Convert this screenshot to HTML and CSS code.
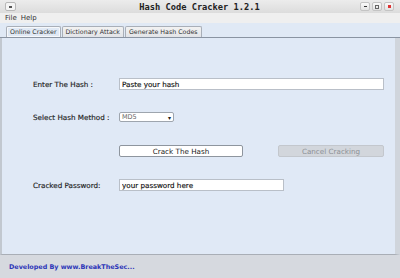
FILE: index.html
```html
<!DOCTYPE html>
<html lang="en">
<head>
    <meta charset="UTF-8">
    <title>Hash Code Cracker 1.2.1</title>
    <link rel="stylesheet" href="styles.css">
</head>
<body>
    <div class="window">
        <div class="titlebar">
            <div class="win-left">
                <span class="win-menu"><span class="dot"></span></span>
            </div>
            <span class="title">Hash Code Cracker 1.2.1</span>
            <div class="win-buttons">
                <span class="wbtn"><span class="min"></span></span>
                <span class="wbtn"><span class="max"></span></span>
                <span class="wbtn"><span class="close"></span></span>
            </div>
        </div>
        <div class="menubar">
            <span>File</span>
            <span>Help</span>
        </div>
        <div class="tabs">
            <span class="tab active">Online Cracker</span>
            <span class="tab">Dictionary Attack</span>
            <span class="tab">Generate Hash Codes</span>
        </div>
        <main class="panel">
            <div class="row row-hash">
                <label class="label">Enter The Hash :</label>
                <input class="field wide" type="text" value="Paste your hash">
            </div>
            <div class="row row-method">
                <label class="label">Select Hash Method :</label>
                <div class="select">
                    <span>MD5</span>
                    <span class="arrow">&#9662;</span>
                </div>
            </div>
            <div class="row row-actions">
                <span class="label"></span>
                <button class="btn crack">Crack The Hash</button>
                <button class="btn cancel" disabled>Cancel Cracking</button>
            </div>
            <div class="row row-result">
                <label class="label">Cracked Password:</label>
                <input class="field medium" type="text" value="your password here">
            </div>
        </main>
        <footer class="status">Developed By www.BreakTheSec...</footer>
    </div>
</body>
</html>
```

FILE: styles.css
```css
body {
    margin: 0;
    padding: 0;
    font-family: 'DejaVu Sans', sans-serif;
    font-size: 7.2px;
    color: #1a1a1a;
}

.window {
    width: 400px;
    height: 278px;
    display: flex;
    flex-direction: column;
    background: #d6d9df;
    overflow: hidden;
}

.titlebar {
    height: 13px;
    display: flex;
    align-items: center;
    background: linear-gradient(#ececec, #dcdcdc);
    padding: 0 6px 0 5px;
}

.win-left {
    width: 34px;
    display: flex;
}

.win-menu {
    width: 9px;
    height: 7px;
    border: 1px solid #b8b8b8;
    border-radius: 2px;
    background: #f4f4f4;
    display: flex;
    align-items: center;
    justify-content: center;
}

.win-menu .dot {
    width: 3px;
    height: 2px;
    background: #555;
}

.title {
    flex: 1;
    text-align: center;
    font-family: 'DejaVu Sans Mono', monospace;
    font-weight: bold;
    font-size: 8.7px;
    color: #222;
}

.win-buttons {
    width: 34px;
    display: flex;
    justify-content: flex-end;
    gap: 2px;
}

.wbtn {
    width: 8px;
    height: 7px;
    border: 1px solid #c4c4c4;
    border-radius: 2px;
    background: linear-gradient(#fafafa, #e2e2e2);
    display: flex;
    align-items: center;
    justify-content: center;
}

.wbtn .min {
    width: 3px;
    height: 1px;
    background: #333;
}

.wbtn .max {
    width: 2px;
    height: 2px;
    border: 1px solid #666;
}

.wbtn .close {
    width: 3px;
    height: 3px;
    background: #d33;
}

.menubar {
    height: 10px;
    display: flex;
    align-items: center;
    gap: 4px;
    padding: 0 5px;
    background: #efefef;
    color: #333;
    font-size: 7px;
}

.tabs {
    height: 14px;
    display: flex;
    align-items: flex-end;
    gap: 1px;
    padding: 0 2px 0 6px;
    background: #e0e9f5;
    border-bottom: 1px solid #8a94a2;
}

.tab {
    height: 10px;
    line-height: 10px;
    padding: 0 3px;
    border: 1px solid #a9afb8;
    border-bottom: none;
    border-radius: 2px 2px 0 0;
    background: linear-gradient(#f2f2f2, #e2e4e8);
    color: #333;
    font-size: 6.3px;
}

.tab.active {
    background: #e0e9f5;
    box-shadow: inset 0 0 0 1px #f6f8fb;
}

.panel {
    flex: 1;
    background: #e0e9f6;
    border-left: 2px solid #c2c8d0;
    border-right: 5px solid #d0d5dc;
    border-bottom: 1px solid #a9aeb6;
    padding: 40px 0 0 31px;
    display: flex;
    flex-direction: column;
}

.row {
    display: flex;
    align-items: center;
}

.row-method {
    margin-top: 22px;
}

.row-actions {
    margin-top: 23px;
}

.row-result {
    margin-top: 22px;
}

.label {
    width: 86px;
    flex-shrink: 0;
    white-space: nowrap;
    color: #222;
    -webkit-text-stroke: 0.15px #222;
}

.field {
    height: 12px;
    box-sizing: border-box;
    border: 1px solid #b9bfc8;
    background: #fff;
    font-family: 'DejaVu Sans', sans-serif;
    font-size: 7.2px;
    color: #111;
    -webkit-text-stroke: 0.15px #111;
    padding: 0 2px;
    margin: 0;
    outline: none;
}

.field.wide {
    width: 265px;
}

.field.medium {
    width: 165px;
}

.select {
    width: 55px;
    height: 10px;
    box-sizing: border-box;
    border: 1px solid #9ea5ae;
    border-radius: 2px;
    background: #fff;
    display: flex;
    align-items: center;
    justify-content: space-between;
    padding: 0 2px;
    font-size: 6.5px;
    color: #666;
}

.select .arrow {
    font-size: 6px;
    color: #222;
}

.btn {
    height: 12px;
    box-sizing: border-box;
    border-radius: 2px;
    font-family: 'DejaVu Sans', sans-serif;
    font-size: 7.2px;
    padding: 0;
    margin: 0;
}

.btn.crack {
    width: 124px;
    border: 1px solid #8e959e;
    background: #fff;
    color: #222;
}

.btn.cancel {
    width: 106px;
    margin-left: 35px;
    border: 1px solid #c3c7cd;
    background: #d2d6dc;
    color: #8c9096;
}

.status {
    height: 23px;
    display: flex;
    align-items: center;
    padding-left: 9px;
    background: #d6d9df;
    color: #2b34b8;
    font-weight: bold;
    font-size: 6.4px;
}
```
